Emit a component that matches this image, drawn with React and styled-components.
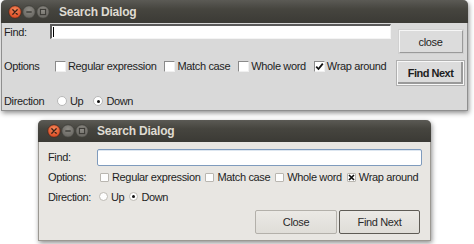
import React from "react";
import styled, { createGlobalStyle, css } from "styled-components";

const Global = createGlobalStyle`
  html, body { margin: 0; padding: 0; background: #ffffff; }
  body { font-family: "Liberation Sans", Arial, sans-serif; font-size: 11px; letter-spacing: -0.35px; color: #1e1e1e; }
  * { box-sizing: border-box; }
`;

const Page = styled.div`
  width: 474px;
  height: 244px;
  display: flex;
  flex-direction: column;
  overflow: hidden;
`;

const Window = styled.div`
  display: flex;
  flex-direction: column;
  border-radius: 5px 5px 0 0;
  ${(p) =>
    p.$kind === "tk"
      ? css`
          width: 467px;
          margin-left: 1px;
          background: #d9d9d9;
          border: 1px solid #8f8f8f;
          border-top: none;
          box-shadow: 1px 2px 5px rgba(0, 0, 0, 0.45);
        `
      : css`
          width: 393px;
          margin-left: 38px;
          margin-top: 9px;
          background: #e8e6e2;
          border: 1px solid #9b9892;
          border-top: none;
          box-shadow: 1px 2px 5px rgba(0, 0, 0, 0.45);
        `}
`;

const TitleBar = styled.div`
  height: ${(p) => (p.$kind === "tk" ? 23 : 22)}px;
  display: flex;
  align-items: center;
  padding-left: ${(p) => (p.$kind === "tk" ? 7 : 9)}px;
  border-radius: 5px 5px 0 0;
  background: linear-gradient(#5b5a55, #46453f 40%, #3b3a35);
  margin: 0 -1px;
`;

const Controls = styled.div`
  display: flex;
  margin-right: ${(p) => (p.$kind === "tk" ? 9 : 8)}px;
`;

const Title = styled.span`
  font-family: "Liberation Sans", Arial, sans-serif;
  font-weight: bold;
  font-size: 12px;
  letter-spacing: -0.2px;
  color: #dfdbd2;
`;

const CircleBtn = ({ kind }) => (
  <svg width="14" height="14" viewBox="0 0 14 14">
    <defs>
      <radialGradient id={"g" + kind} cx="50%" cy="35%" r="65%">
        {kind === "close" ? (
          <>
            <stop offset="0" stopColor="#f58a5c" />
            <stop offset="1" stopColor="#d9461f" />
          </>
        ) : (
          <>
            <stop offset="0" stopColor="#8e8c86" />
            <stop offset="1" stopColor="#66645f" />
          </>
        )}
      </radialGradient>
    </defs>
    <circle cx="7" cy="7" r="6.3" fill={`url(#g${kind})`} stroke={kind === "close" ? "#3a2a22" : "#3e3d39"} strokeWidth="0.8" />
    {kind === "close" && (
      <path d="M4.8 4.8 L9.2 9.2 M9.2 4.8 L4.8 9.2" stroke="#3b2118" strokeWidth="1.3" strokeLinecap="round" />
    )}
    {kind === "min" && <path d="M4.3 7 H9.7" stroke="#3c3b37" strokeWidth="1.4" />}
    {kind === "max" && <rect x="4.4" y="4.4" width="5.2" height="5.2" fill="none" stroke="#3c3b37" strokeWidth="1.1" />}
  </svg>
);

/* ---------- Tk window ---------- */
const TkBody = styled.div`
  display: flex;
  height: 87px;
`;

const TkGrid = styled.div`
  display: grid;
  grid-template-columns: 46px 341px;
  grid-template-rows: 17px 1fr 18px;
  padding-left: 2px;
  align-items: center;
`;

const Label = styled.span`
  white-space: nowrap;
  color: #1e1e1e;
`;

const TkEntry = styled.div`
  height: 15px;
  align-self: start;
  margin-top: 1px;
  background: #ffffff;
  border-top: 2px solid #5a5a5a;
  border-left: 2px solid #5a5a5a;
  border-right: 1px solid #f4f4f4;
  border-bottom: 1px solid #f4f4f4;
  position: relative;
  &::after {
    content: "";
    position: absolute;
    left: 1px;
    top: 1px;
    width: 1px;
    height: 10px;
    background: #000;
  }
`;

const OptionRow = styled.div`
  display: flex;
  align-items: center;
  min-width: 0;
  gap: ${(p) => p.$gap}px;
  padding-left: ${(p) => p.$pad}px;
  white-space: nowrap;
`;

const Option = styled.label`
  display: flex;
  align-items: center;
  gap: ${(p) => p.$gap}px;
`;

const TkBox = styled.span`
  width: 11px;
  height: 11px;
  background: #fff;
  border-top: 1px solid #8a8a8a;
  border-left: 1px solid #8a8a8a;
  border-right: 1px solid #f0f0f0;
  border-bottom: 1px solid #f0f0f0;
  display: flex;
  align-items: center;
  justify-content: center;
`;

const TkRadio = styled.span`
  width: 10px;
  height: 10px;
  border-radius: 50%;
  background: #fff;
  border: 1px solid #b8b8b8;
  display: flex;
  align-items: center;
  justify-content: center;
  &::after {
    content: "";
    width: 3px;
    height: 3px;
    border-radius: 50%;
    background: ${(p) => (p.$on ? "#111" : "transparent")};
  }
`;

const TkButtons = styled.div`
  width: 76px;
  margin-left: 3px;
  display: flex;
  flex-direction: column;
  align-items: center;
  padding-top: 7px;
  gap: 7px;
`;

const TkButton = styled.div`
  display: flex;
  align-items: center;
  justify-content: center;
  font-size: 11px;
  background: #dcdcdc;
  color: #1e1e1e;
  ${(p) =>
    p.$default
      ? css`
          width: 69px;
          height: 26px;
          border: 1px solid #b0b0b0;
          box-shadow: inset 0 0 0 1px #f8f8f8, inset -1px -1px 0 2px #9a9a9a;
          font-weight: bold;
          letter-spacing: -0.5px;
        `
      : css`
          width: 64px;
          height: 23px;
          border-top: 1px solid #f6f6f6;
          border-left: 1px solid #f6f6f6;
          border-right: 1px solid #9a9a9a;
          border-bottom: 1px solid #9a9a9a;
          box-shadow: 0 0 0 1px #d0d0d0;
        `}
`;

const Check = () => (
  <svg width="9" height="9" viewBox="0 0 9 9">
    <path d="M1.2 4.6 L3.5 7 L7.8 1.6" fill="none" stroke="#111" strokeWidth="1.8" />
  </svg>
);

/* ---------- GTK window ---------- */
const GtkBody = styled.div`
  display: flex;
  flex-direction: column;
  padding: 6px 8px 6px 9px;
`;

const GtkGrid = styled.div`
  display: grid;
  grid-template-columns: 49px minmax(0, 1fr);
  grid-template-rows: 18px 18px 17px;
  row-gap: 2px;
  align-items: center;
`;

const GtkEntry = styled.div`
  height: 17px;
  background: #ffffff;
  border: 1px solid #7f9bbd;
  border-radius: 2px;
  box-shadow: inset 0 1px 0 #dde6f0;
`;

const GtkBox = styled.span`
  width: 9px;
  height: 9px;
  background: #fdfdfd;
  border: 1px solid #b9b6b0;
  border-radius: 1px;
  display: flex;
  align-items: center;
  justify-content: center;
`;

const GtkRadio = styled.span`
  width: 9px;
  height: 9px;
  border-radius: 50%;
  background: #fdfdfd;
  border: 1px solid #bdbab4;
  display: flex;
  align-items: center;
  justify-content: center;
  &::after {
    content: "";
    width: 3px;
    height: 3px;
    border-radius: 50%;
    background: ${(p) => (p.$on ? "#111" : "transparent")};
  }
`;

const GtkButtons = styled.div`
  display: flex;
  justify-content: flex-end;
  gap: 2px;
  margin-top: 5px;
  margin-right: 2px;
`;

const GtkButton = styled.div`
  width: ${(p) => p.$w}px;
  height: 24px;
  display: flex;
  align-items: center;
  justify-content: center;
  border-radius: 2px;
  background: linear-gradient(#ebe9e5, #dfddd8);
  border: 1px solid ${(p) => (p.$default ? "#5e5b55" : "#b3b0aa")};
  color: #2a2a2a;
`;

const Cross = () => (
  <svg width="7" height="7" viewBox="0 0 7 7">
    <path d="M1 1 L6 6 M6 1 L1 6" stroke="#111" strokeWidth="1.7" />
  </svg>
);

export default function App() {
  return (
    <Page>
      <Global />
      <Window $kind="tk">
        <TitleBar $kind="tk">
          <Controls $kind="tk">
            <CircleBtn kind="close" />
            <CircleBtn kind="min" />
            <CircleBtn kind="max" />
          </Controls>
          <Title>Search Dialog</Title>
        </TitleBar>
        <TkBody>
          <TkGrid>
            <Label>Find:</Label>
            <TkEntry />
            <Label>Options</Label>
            <OptionRow $gap={8} $pad={5}>
              <Option $gap={2}>
                <TkBox />
                Regular expression
              </Option>
              <Option $gap={2}>
                <TkBox />
                Match case
              </Option>
              <Option $gap={2}>
                <TkBox />
                Whole word
              </Option>
              <Option $gap={2}>
                <TkBox>
                  <Check />
                </TkBox>
                Wrap around
              </Option>
            </OptionRow>
            <Label>Direction</Label>
            <OptionRow $gap={10} $pad={7}>
              <Option $gap={3}>
                <TkRadio />
                Up
              </Option>
              <Option $gap={3}>
                <TkRadio $on />
                Down
              </Option>
            </OptionRow>
          </TkGrid>
          <TkButtons>
            <TkButton>close</TkButton>
            <TkButton $default>Find Next</TkButton>
          </TkButtons>
        </TkBody>
      </Window>

      <Window $kind="gtk">
        <TitleBar $kind="gtk">
          <Controls $kind="gtk">
            <CircleBtn kind="close" />
            <CircleBtn kind="min" />
            <CircleBtn kind="max" />
          </Controls>
          <Title>Search Dialog</Title>
        </TitleBar>
        <GtkBody>
          <GtkGrid>
            <Label>Find:</Label>
            <GtkEntry />
            <Label>Options:</Label>
            <OptionRow $gap={5} $pad={3}>
              <Option $gap={3}>
                <GtkBox />
                Regular expression
              </Option>
              <Option $gap={3}>
                <GtkBox />
                Match case
              </Option>
              <Option $gap={3}>
                <GtkBox />
                Whole word
              </Option>
              <Option $gap={3}>
                <GtkBox>
                  <Cross />
                </GtkBox>
                Wrap around
              </Option>
            </OptionRow>
            <Label>Direction:</Label>
            <OptionRow $gap={5} $pad={2}>
              <Option $gap={3}>
                <GtkRadio />
                Up
              </Option>
              <Option $gap={3}>
                <GtkRadio $on />
                Down
              </Option>
            </OptionRow>
          </GtkGrid>
          <GtkButtons>
            <GtkButton $w={82}>Close</GtkButton>
            <GtkButton $w={81} $default>
              Find Next
            </GtkButton>
          </GtkButtons>
        </GtkBody>
      </Window>
    </Page>
  );
}
